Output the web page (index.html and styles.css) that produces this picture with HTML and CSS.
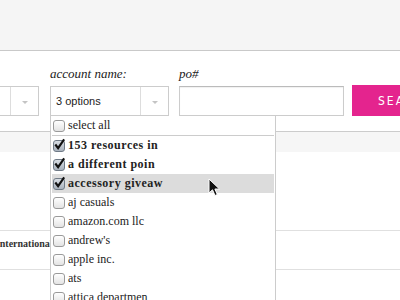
FILE: index.html
```html
<!DOCTYPE html>
<html lang="en">
<head>
    <meta charset="UTF-8">
    <title>Orders - Search</title>
    <link rel="stylesheet" href="styles.css">
</head>
<body>
    <div class="topbar"></div>

    <form class="filters">
        <div class="field field-first">
            <label>&nbsp;</label>
            <div class="select">
                <span class="select-value"></span>
                <span class="select-arrow"></span>
            </div>
        </div>

        <div class="field field-account">
            <label>account name:</label>
            <div class="select">
                <span class="select-value">3 options</span>
                <span class="select-arrow"></span>
            </div>

            <div class="dropdown">
                <div class="option option-all"><span class="box"></span>select all</div>
                <div class="option checked"><span class="box"><svg viewBox="0 0 14 14"><path d="M2.5 7 L5.5 11 L12 1.5"/></svg></span>153 resources in</div>
                <div class="option checked"><span class="box"><svg viewBox="0 0 14 14"><path d="M2.5 7 L5.5 11 L12 1.5"/></svg></span>a different poin</div>
                <div class="option checked hover"><span class="box"><svg viewBox="0 0 14 14"><path d="M2.5 7 L5.5 11 L12 1.5"/></svg></span>accessory giveaw</div>
                <div class="option"><span class="box"></span>aj casuals</div>
                <div class="option"><span class="box"></span>amazon.com llc</div>
                <div class="option"><span class="box"></span>andrew's</div>
                <div class="option"><span class="box"></span>apple inc.</div>
                <div class="option"><span class="box"></span>ats</div>
                <div class="option"><span class="box"></span>attica departmen</div>

                <svg class="cursor" viewBox="0 0 13 19">
                    <path d="M1 1 L1 15 L4.5 11.8 L7 17.5 L9.3 16.5 L6.9 11 L11.5 11 Z"/>
                </svg>
            </div>
        </div>

        <div class="field field-po">
            <label for="po">po#</label>
            <input type="text" id="po">
        </div>

        <button type="submit" class="search-btn">SEARCH</button>
    </form>

    <div class="results">
        <div class="results-head"></div>
        <div class="results-row tall"></div>
        <div class="results-row"><span class="account">international</span></div>
        <div class="results-row"></div>
    </div>
</body>
</html>
```

FILE: styles.css
```css
html, body {
    overflow: hidden;
}
body {
    margin: 0;
    background: white;
    font-family: "Liberation Serif", serif;
    color: #333;
}
.topbar {
    height: 50px;
    background: #f5f5f5;
    border-bottom: 1px solid #c9c9c9;
}
.filters {
    display: flex;
    align-items: flex-end;
    padding: 15px 0 15px 0;
}
.field {
    position: relative;
    display: flex;
    flex-direction: column;
}
.field label {
    font-style: italic;
    font-size: 13px;
    line-height: 16px;
    margin-bottom: 4px;
    color: #222;
}
.field-first {
    margin-left: -80px;
}
.field-account {
    margin-left: 11px;
    z-index: 2;
}
.field-po {
    margin-left: 10px;
}
.select {
    display: flex;
    width: 117px;
    height: 28px;
    border: 1px solid #ccc;
    background: white;
}
.select-value {
    flex: 1;
    padding-left: 5px;
    font-family: "Liberation Sans", Arial, sans-serif;
    font-size: 11px;
    line-height: 28px;
    color: #222;
}
.select-arrow {
    width: 27px;
    border-left: 1px solid #ddd;
    display: flex;
    align-items: center;
    justify-content: center;
}
.select-arrow::after {
    content: "";
    border-left: 3.5px solid transparent;
    border-right: 3.5px solid transparent;
    border-top: 3.5px solid #c4c4c4;
    margin-top: 2px;
}
.field-po input {
    box-sizing: border-box;
    width: 165px;
    height: 30px;
    padding: 0 5px;
    margin: 0;
    border: 1px solid #ccc;
    border-top-color: #bbb;
    box-shadow: inset 0 1px 1px rgba(0,0,0,0.06);
}
.search-btn {
    margin-left: 8px;
    width: 120px;
    height: 31px;
    padding: 0 0 0 26px;
    border: none;
    background: #e4248e;
    color: white;
    font-family: "DejaVu Sans Condensed", "DejaVu Sans", sans-serif;
    font-size: 12px;
    letter-spacing: 2px;
    text-align: left;
    white-space: nowrap;
}

/* dropdown checklist */
.dropdown {
    position: absolute;
    top: 100%;
    left: 0;
    width: 222px;
    height: 190px;
    padding: 0 1px;
    background: white;
    border: 1px solid #ccc;
    border-top: none;
    overflow: hidden;
}
.option {
    display: flex;
    align-items: center;
    gap: 3px;
    height: 19px;
    padding-left: 1px;
    font-size: 12px;
    color: #222;
    white-space: nowrap;
}
.option-all {
    border-bottom: 1px solid #ccc;
}
.option.checked {
    font-weight: bold;
    letter-spacing: 0.5px;
}
.option.hover {
    background: #dcdcdc;
}
.box {
    position: relative;
    flex: none;
    width: 10px;
    height: 10px;
    border: 1px solid #9a9a9a;
    border-radius: 3px;
    background: linear-gradient(#ffffff, #e3e3e3);
}
.checked .box {
    border-color: #6f7a86;
    background: linear-gradient(#d8dde3, #a9b2bd);
}
.box svg {
    position: absolute;
    left: -1px;
    top: -3px;
    width: 13px;
    height: 13px;
}
.box path {
    fill: none;
    stroke: #111;
    stroke-width: 2.3;
}
.cursor {
    position: absolute;
    left: 157px;
    top: 62px;
    width: 13px;
    height: 19px;
}
.cursor path {
    fill: #111;
    stroke: white;
    stroke-width: 1;
}

/* results table behind */
.results-head {
    height: 20px;
    background: #f6f6f6;
    border-top: 1px solid #ccc;
}
.results-row {
    height: 38px;
    border-bottom: 1px solid #e0e0e0;
}
.results-row.tall {
    height: 78px;
}
.account {
    display: block;
    margin-left: -3px;
    padding-top: 7px;
    font-size: 10px;
    font-weight: bold;
    color: #333;
}
```
